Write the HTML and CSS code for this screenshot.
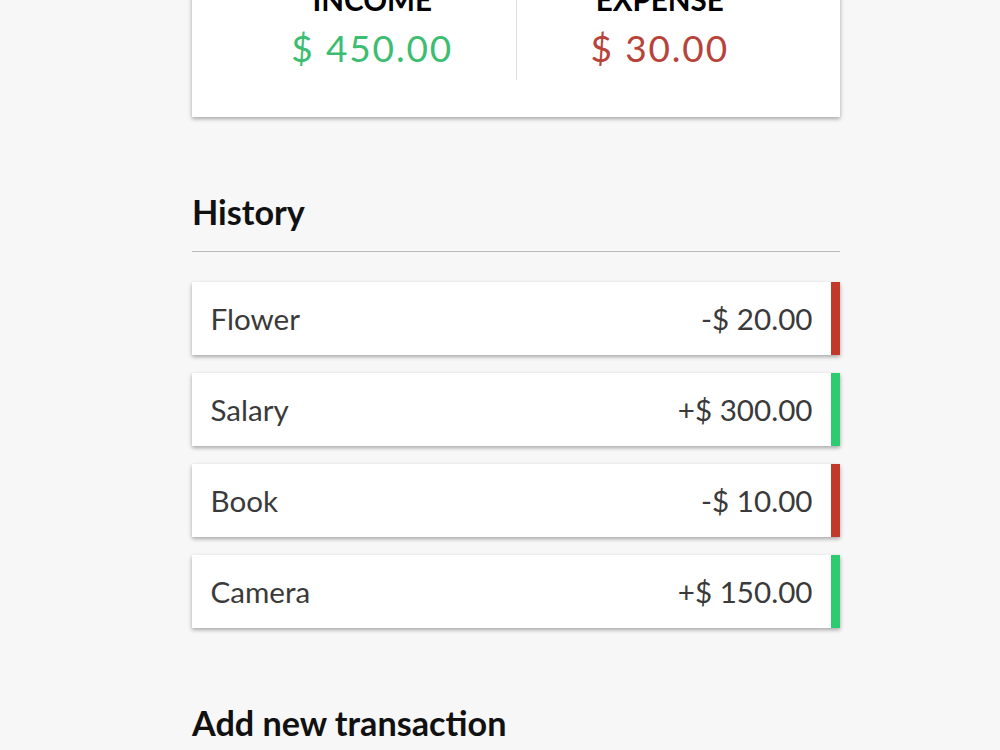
FILE: index.html
```html
<!DOCTYPE html>
<html lang="en">
<head>
<meta charset="utf-8">
<title>Expense Tracker</title>
<link rel="stylesheet" href="styles.css">
</head>
<body>
<div class="container">
  <div class="inc-exp-container">
    <div class="inc-col">
      <h4>Income</h4>
      <p class="money plus">$ 450.00</p>
    </div>
    <div class="inc-col">
      <h4>Expense</h4>
      <p class="money minus">$ 30.00</p>
    </div>
  </div>

  <h3>History</h3>
  <ul class="list">
    <li class="minus"><span>Flower</span><span>-$ 20.00</span></li>
    <li class="plus"><span>Salary</span><span>+$ 300.00</span></li>
    <li class="minus"><span>Book</span><span>-$ 10.00</span></li>
    <li class="plus"><span>Camera</span><span>+$ 150.00</span></li>
  </ul>

  <h3>Add new transaction</h3>
</div>
</body>
</html>
```

FILE: styles.css
```css
* { box-sizing: border-box; }

html, body {
  margin: 0;
  background-color: #f7f7f7;
  font-family: "Lato", "Liberation Sans", sans-serif;
  font-size: 29.6px;
  overflow: hidden;
}

.container {
  width: 648px;
  margin: -55.4px 0 0 192px;
}

h3 {
  font-size: 34.2px;
  font-weight: 700;
  color: #111;
  border-bottom: 1.85px solid #bbb;
  padding-bottom: 18.5px;
  margin: 74px 0 18.5px;
  line-height: 1.2;
}

h4 {
  margin: 0;
  font-size: 29.6px;
  text-transform: uppercase;
  line-height: 1.2;
}

.inc-exp-container {
  background-color: #fff;
  box-shadow: 0 1.85px 5.5px rgba(0, 0, 0, 0.12), 0 1.85px 3.7px rgba(0, 0, 0, 0.24);
  padding: 37px;
  display: flex;
  justify-content: space-between;
  margin: 0 0 37px;
}

.inc-col {
  flex: 1;
  text-align: center;
}

.inc-col:first-of-type {
  border-right: 1.5px solid #dedede;
}

.money {
  font-size: 37px;
  letter-spacing: 1.85px;
  margin: 9.25px 0;
  line-height: 1.2;
}

.money.plus { color: #3cbd72; }
.money.minus { color: #b8433a; }

.list {
  list-style-type: none;
  padding: 0;
  margin: 30.8px 0 74px;
}

.list li {
  background-color: #fff;
  box-shadow: 0 1.85px 5.5px rgba(0, 0, 0, 0.12), 0 1.85px 3.7px rgba(0, 0, 0, 0.24);
  color: #3a3a3a;
  display: flex;
  justify-content: space-between;
  padding: 18.5px;
  margin: 18.5px 0;
  line-height: 1.2;
}

.list li:first-child { margin-top: 0; }

.list li.plus { border-right: 9.25px solid #2ecc71; }
.list li.minus { border-right: 9.25px solid #c0392b; }
```
